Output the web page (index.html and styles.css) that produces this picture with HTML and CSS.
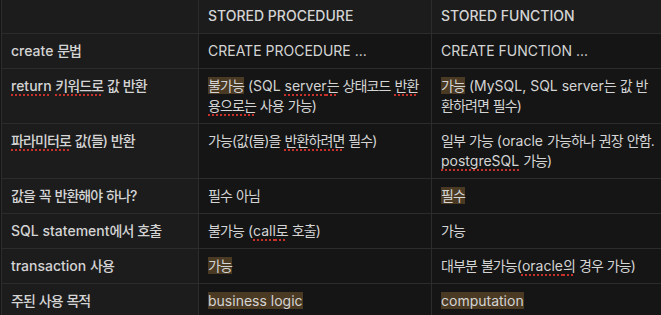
FILE: index.html
```html
<!DOCTYPE html>
<html lang="ko">
<head>
<meta charset="utf-8">
<link rel="stylesheet" href="styles.css">
</head>
<body>
<div class="table">
  <div class="cell head corner"></div>
  <div class="cell head">STORED PROCEDURE</div>
  <div class="cell head">STORED FUNCTION</div>

  <div class="cell rowhead">create <span class="k">문법</span></div>
  <div class="cell">CREATE PROCEDURE ...</div>
  <div class="cell">CREATE FUNCTION ...</div>

  <div class="cell rowhead"><span class="sp">return</span> <span class="sp k">키워드로</span> <span class="k">값 반환</span></div>
  <div class="cell"><span class="hl k">불가능</span> (SQL <span class="sp">server<span class="k">는</span></span> <span class="k">상태코드</span> <span class="sp k">반환</span> <span class="sp k">용으로는</span> <span class="k">사용 가능</span>)</div>
  <div class="cell"><span class="hl k">가능</span> (MySQL, SQL server<span class="k">는 값 반환하려면 필수</span>)</div>

  <div class="cell rowhead"><span class="sp k">파라미터로</span> <span class="k">값(들) 반환</span></div>
  <div class="cell"><span class="k">가능(값(들)을</span> <span class="sp k">반환하려면</span> <span class="k">필수</span>)</div>
  <div class="cell"><span class="k">일부 가능</span> (oracle <span class="k">가능하나 권장 안함</span>. <span class="sp">postgreSQL</span> <span class="k">가능</span>)</div>

  <div class="cell rowhead"><span class="k">값을 꼭 반환해야 하나?</span></div>
  <div class="cell"><span class="k">필수 아님</span></div>
  <div class="cell"><span class="hl k">필수</span></div>

  <div class="cell rowhead">SQL statement<span class="k">에서 호출</span></div>
  <div class="cell"><span class="k">불가능</span> (<span class="sp">call<span class="k">로</span></span> <span class="k">호출</span>)</div>
  <div class="cell"><span class="k">가능</span></div>

  <div class="cell rowhead">transaction <span class="k">사용</span></div>
  <div class="cell"><span class="hl k">가능</span></div>
  <div class="cell"><span class="k">대부분 불가능</span>(<span class="sp">oracle<span class="k">의</span></span> <span class="k">경우 가능</span>)</div>

  <div class="cell rowhead"><span class="k">주된 사용 목적</span></div>
  <div class="cell"><span class="hl">business logic</span></div>
  <div class="cell"><span class="hl">computation</span></div>
</div>
</body>
</html>
```
FILE: styles.css
```css
html, body {
  margin: 0;
  padding: 0;
  background: #151515;
  overflow: hidden;
}

body {
  font-family: Inter, "Noto Sans CJK KR", sans-serif;
  font-size: 14px;
  line-height: 20px;
  color: #d4d4d4;
}

.table {
  display: grid;
  grid-template-columns: 197px 233px 233px;
  width: max-content;
  margin: -1px 0 0 1px;
  border-left: 1px solid #2c2c2c;
}

.cell {
  padding: 7px 9px;
  border-right: 1px solid #2c2c2c;
  border-bottom: 1px solid #2c2c2c;
  background: #151515;
  min-height: 20px;
}

.head,
.rowhead {
  background: #1c1c1c;
  font-weight: 500;
}

.k {
  letter-spacing: -0.9px;
  word-spacing: 0.9px;
}

.hl {
  background: #4a3923;
}

.sp {
  text-decoration: underline dotted #c8312b;
  text-decoration-thickness: 2px;
  text-underline-offset: 3px;
}
```
